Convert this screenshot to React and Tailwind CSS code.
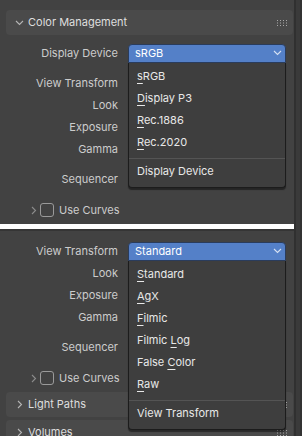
import React from 'react'

const topItems = [
  ['sRGB', 0],
  ['Display P3', 0],
  ['Rec.1886', 0],
  ['Rec.2020', 0],
]

const bottomItems = [
  ['Standard', 0],
  ['AgX', 0],
  ['Filmic', 0],
  ['Filmic Log', 7],
  ['False Color', 6],
  ['Raw', 0],
]

function ChevronDown({ className = '' }) {
  return (
    <svg width="9" height="6" viewBox="0 0 9 6" className={className}>
      <polyline points="1,1 4.5,4.5 8,1" fill="none" stroke="currentColor" strokeWidth="1.1" />
    </svg>
  )
}

function ChevronRight({ className = '' }) {
  return (
    <svg width="6" height="9" viewBox="0 0 6 9" className={className}>
      <polyline points="1,1 4.5,4.5 1,8" fill="none" stroke="currentColor" strokeWidth="1.1" />
    </svg>
  )
}

function Grip() {
  const dots = []
  for (let r = 0; r < 3; r++)
    for (let c = 0; c < 4; c++) dots.push(<rect key={r + '-' + c} x={c * 3} y={r * 2.5} width="1" height="1" />)
  return (
    <svg width="10" height="6" viewBox="0 0 10 6" className="ml-auto fill-[#a8a8a8]">
      {dots}
    </svg>
  )
}

function PanelHeader({ title, open, className = '' }) {
  return (
    <div className={`ml-[6px] mr-px flex h-[25px] shrink-0 items-center rounded-[4px] bg-[#4a4a4a] pl-[9px] pr-[6px] ${className}`}>
      {open ? <ChevronDown className="text-[#b5b5b5]" /> : <ChevronRight className="ml-[2px] mr-[1px] text-[#b5b5b5]" />}
      <span className="ml-[4px] text-[11px] text-[#dedede]">{title}</span>
      <Grip />
    </div>
  )
}

function Label({ children }) {
  return <div className="w-[118px] shrink-0 text-right text-[11px] text-[#cccccc]">{children}</div>
}

function Row({ label, children, className = '' }) {
  return (
    <div className={`flex h-5 shrink-0 items-center ${className}`}>
      <Label>{label}</Label>
      <div className="ml-[10px] w-[158px]">{children}</div>
    </div>
  )
}

function MenuItem({ text, u }) {
  return (
    <div className="flex h-[22px] items-center pl-[8px] text-[11px] text-[#e8e8e8]">
      <span className="whitespace-pre">
        {text.slice(0, u)}
        <span className="underline decoration-1 underline-offset-[3px]">{text[u]}</span>
        {text.slice(u + 1)}
      </span>
    </div>
  )
}

function Dropdown({ value, items, title }) {
  return (
    <div className="relative">
      <div className="flex h-[19px] items-center justify-between rounded-t-[4px] border border-[#2a3c5c] bg-[#5480c8] pl-[6px] pr-[3px] text-[11px] text-white">
        <span>{value}</span>
        <ChevronDown className="text-[#d6e0f2]" />
      </div>
      <div className="absolute left-0 top-full z-10 w-full rounded-b-[4px] border border-t-0 border-[#1c1c1c] bg-[#3e3e3e] pb-[4px] pt-[3px] shadow-[0_2px_1px_rgba(0,0,0,0.45)]">
        {items.map(([t, u]) => (
          <MenuItem key={t} text={t} u={u} />
        ))}
        <div className="mt-[4px] mb-[2px] h-px bg-[#545454]" />
        <div className="flex h-[22px] items-center pl-[8px] text-[11px] text-[#e8e8e8]">{title}</div>
      </div>
    </div>
  )
}

function UseCurves({ className = '' }) {
  return (
    <div className={`flex h-5 shrink-0 items-center pl-[31px] ${className}`}>
      <ChevronRight className="text-[#8c8c8c]" />
      <div className="ml-[3px] h-[14px] w-[14px] rounded-[3px] border border-[#9a9a9a]" />
      <span className="ml-[5px] text-[11px] text-[#cccccc]">Use Curves</span>
    </div>
  )
}

export default function App() {
  return (
    <div className="flex h-[436px] w-[302px] overflow-hidden bg-[#424242] font-['Inter',sans-serif]">
      <div className="flex w-[294px] shrink-0 flex-col">
        {/* upper capture */}
        <div className="flex h-[224px] shrink-0 flex-col pt-[10px]">
          <PanelHeader title="Color Management" open />
          <Row label="Display Device" className="mt-[8px]">
            <Dropdown value="sRGB" items={topItems} title="Display Device" />
          </Row>
          <Row label="View Transform" className="mt-[10px]" />
          <Row label="Look" className="mt-[2px]" />
          <Row label="Exposure" className="mt-[2px]" />
          <Row label="Gamma" className="mt-[2px]" />
          <Row label="Sequencer" className="mt-[10px]" />
          <UseCurves className="mt-[11px]" />
        </div>

        <div className="h-[5px] shrink-0 bg-white" />
        <div className="h-[2px] shrink-0 bg-[#353535]" />

        {/* lower capture */}
        <div className="flex flex-1 flex-col">
          <Row label="View Transform" className="mt-[10px]">
            <Dropdown value="Standard" items={bottomItems} title="View Transform" />
          </Row>
          <Row label="Look" className="mt-[2px]" />
          <Row label="Exposure" className="mt-[2px]" />
          <Row label="Gamma" className="mt-[2px]" />
          <Row label="Sequencer" className="mt-[10px]" />
          <UseCurves className="mt-[11px]" />
          <PanelHeader title="Light Paths" className="mt-[4px]" />
          <PanelHeader title="Volumes" className="mt-[3px]" />
        </div>
      </div>
      <div className="flex w-[8px] shrink-0">
        <div className="w-[2px] bg-[#303030]" />
        <div className="w-[4px] bg-[#3a3a3a]" />
        <div className="w-[2px] bg-[#333333]" />
      </div>
    </div>
  )
}
